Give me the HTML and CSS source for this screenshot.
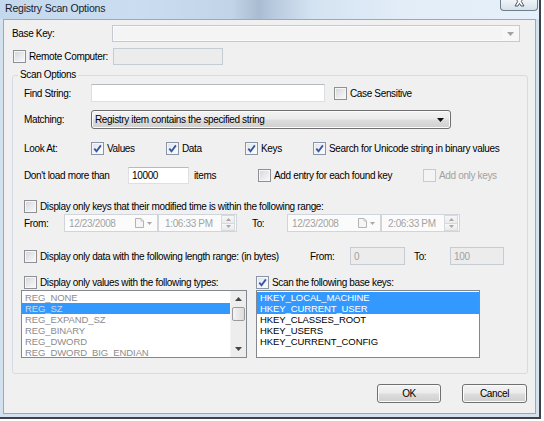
FILE: index.html
```html
<!DOCTYPE html>
<html>
<head>
<meta charset="utf-8">
<title>Registry Scan Options</title>
<link rel="stylesheet" href="styles.css">
</head>
<body>
<div class="window">
  <div class="titlebar">
    <span class="title">Registry Scan Options</span>
    <div class="close">
      <svg width="11" height="8" viewBox="0 4 11 8"><path d="M1 1 L4 1 L5.5 3.6 L7 1 L10 1 L7.3 5.5 L10 10 L7 10 L5.5 7.4 L4 10 L1 10 L3.7 5.5 Z" fill="#fdfdfd" stroke="#3f4852" stroke-width="0.9"/></svg>
    </div>
  </div>
  <div class="frame">
    <div class="client">
      <div class="row r-base">
        <span class="w-base">Base Key:</span>
        <div class="combo">
          <span class="combo-fill"></span>
          <span class="combo-btn"><svg width="7" height="4" viewBox="0 0 7 4"><path d="M0 0 L7 0 L3.5 4 Z" fill="#a3a3a3"/></svg></span>
        </div>
      </div>

      <div class="row r-remote">
        <span class="chk first"><span class="cb"></span><span class="t w-remote">Remote Computer:</span></span>
        <div class="inp-dis w-remote-inp"></div>
      </div>

      <fieldset class="group">
        <legend>Scan Options</legend>

        <div class="row r-find">
          <span class="w-lbl">Find String:</span>
          <div class="inp w-find"></div>
          <span class="chk case"><span class="cb"></span><span class="t">Case Sensitive</span></span>
        </div>

        <div class="row r-match">
          <span class="w-lbl">Matching:</span>
          <div class="select">
            <span class="select-text">Registry item contains the specified string</span>
            <svg width="7" height="4" viewBox="0 0 7 4"><path d="M0 0 L7 0 L3.5 4 Z" fill="#111"/></svg>
          </div>
        </div>

        <div class="row r-look">
          <span class="w-lbl">Look At:</span>
          <span class="chk c-values"><span class="cb on"><svg width="11" height="11" viewBox="0 0 11 11"><path d="M2.3 5.6 L4.5 8.2 L8.9 2.4" fill="none" stroke="#3457a4" stroke-width="1.8"/></svg></span><span class="t">Values</span></span>
          <span class="chk c-data"><span class="cb on"><svg width="11" height="11" viewBox="0 0 11 11"><path d="M2.3 5.6 L4.5 8.2 L8.9 2.4" fill="none" stroke="#3457a4" stroke-width="1.8"/></svg></span><span class="t">Data</span></span>
          <span class="chk c-keys"><span class="cb on"><svg width="11" height="11" viewBox="0 0 11 11"><path d="M2.3 5.6 L4.5 8.2 L8.9 2.4" fill="none" stroke="#3457a4" stroke-width="1.8"/></svg></span><span class="t">Keys</span></span>
          <span class="chk"><span class="cb on"><svg width="11" height="11" viewBox="0 0 11 11"><path d="M2.3 5.6 L4.5 8.2 L8.9 2.4" fill="none" stroke="#3457a4" stroke-width="1.8"/></svg></span><span class="t">Search for Unicode string in binary values</span></span>
        </div>

        <div class="row r-load">
          <span class="w-load">Don't load more than</span>
          <div class="inp w-count"><span class="val">10000</span></div>
          <span class="w-items">items</span>
          <span class="chk"><span class="cb"></span><span class="t w-addentry">Add entry for each found key</span></span>
          <span class="chk dis"><span class="cb"></span><span class="t">Add only keys</span></span>
        </div>

        <div class="row r-keys">
          <span class="chk"><span class="cb"></span><span class="t">Display only keys that their modified time is within the following range:</span></span>
        </div>

        <div class="row r-from">
          <span class="w-from">From:</span>
          <div class="date">
            <span class="date-text">12/23/2008</span>
            <svg class="cal" width="9" height="10" viewBox="0 0 9 10"><path d="M0.5 0.5 H6 L8.5 3 V9.5 H0.5 Z" fill="#f6f6f6" stroke="#b3b3b3"/><path d="M6 0.5 V3 H8.5" fill="none" stroke="#c4c4c4"/></svg>
            <svg class="darr" width="5" height="3" viewBox="0 0 5 3"><path d="M0 0 L5 0 L2.5 3 Z" fill="#a8a8a8"/></svg>
          </div>
          <div class="time">
            <span class="date-text t-time">1:06:33 PM</span>
            <span class="spin"><span class="sp"><svg width="5" height="3" viewBox="0 0 5 3"><path d="M0 3 L2.5 0 L5 3 Z" fill="#a8a8a8"/></svg></span><span class="sp"><svg width="5" height="3" viewBox="0 0 5 3"><path d="M0 0 L5 0 L2.5 3 Z" fill="#a8a8a8"/></svg></span></span>
          </div>
          <span class="w-to">To:</span>
          <div class="date">
            <span class="date-text">12/23/2008</span>
            <svg class="cal" width="9" height="10" viewBox="0 0 9 10"><path d="M0.5 0.5 H6 L8.5 3 V9.5 H0.5 Z" fill="#f6f6f6" stroke="#b3b3b3"/><path d="M6 0.5 V3 H8.5" fill="none" stroke="#c4c4c4"/></svg>
            <svg class="darr" width="5" height="3" viewBox="0 0 5 3"><path d="M0 0 L5 0 L2.5 3 Z" fill="#a8a8a8"/></svg>
          </div>
          <div class="time">
            <span class="date-text t-time">2:06:33 PM</span>
            <span class="spin"><span class="sp"><svg width="5" height="3" viewBox="0 0 5 3"><path d="M0 3 L2.5 0 L5 3 Z" fill="#a8a8a8"/></svg></span><span class="sp"><svg width="5" height="3" viewBox="0 0 5 3"><path d="M0 0 L5 0 L2.5 3 Z" fill="#a8a8a8"/></svg></span></span>
          </div>
        </div>

        <div class="row r-data">
          <span class="chk w-datachk"><span class="cb"></span><span class="t">Display only data with the following length range: (in bytes)</span></span>
          <span class="w-from2">From:</span>
          <div class="inp-dis w-len1"><span class="val gray">0</span></div>
          <span class="w-to2">To:</span>
          <div class="inp-dis w-len2"><span class="val gray">100</span></div>
        </div>

        <div class="row r-vals">
          <span class="chk w-valchk"><span class="cb"></span><span class="t">Display only values with the following types:</span></span>
          <span class="chk"><span class="cb on"><svg width="11" height="11" viewBox="0 0 11 11"><path d="M2.3 5.6 L4.5 8.2 L8.9 2.4" fill="none" stroke="#3457a4" stroke-width="1.8"/></svg></span><span class="t">Scan the following base keys:</span></span>
        </div>

        <div class="row r-lists">
          <div class="list list-types">
            <div class="items dis">
              <div class="item">REG_NONE</div>
              <div class="item sel">REG_SZ</div>
              <div class="item">REG_EXPAND_SZ</div>
              <div class="item">REG_BINARY</div>
              <div class="item">REG_DWORD</div>
              <div class="item">REG_DWORD_BIG_ENDIAN</div>
            </div>
            <div class="sbar">
              <span class="sbtn"><svg width="7" height="4" viewBox="0 0 7 4"><path d="M0 4 L3.5 0 L7 4 Z" fill="#444"/></svg></span>
              <span class="thumb"></span>
              <span class="track"></span>
              <span class="sbtn"><svg width="7" height="4" viewBox="0 0 7 4"><path d="M0 0 L7 0 L3.5 4 Z" fill="#444"/></svg></span>
            </div>
          </div>
          <div class="list list-keys">
            <div class="items">
              <div class="item sel">HKEY_LOCAL_MACHINE</div>
              <div class="item sel">HKEY_CURRENT_USER</div>
              <div class="item">HKEY_CLASSES_ROOT</div>
              <div class="item">HKEY_USERS</div>
              <div class="item">HKEY_CURRENT_CONFIG</div>
            </div>
          </div>
        </div>
      </fieldset>

      <div class="row r-buttons">
        <div class="btn b-ok">OK</div>
        <div class="btn b-cancel">Cancel</div>
      </div>
    </div>
  </div>
</div>
</body>
</html>
```
FILE: styles.css
```css
* { box-sizing: border-box; }
html, body { margin: 0; padding: 0; }
body {
  background: #ffffff;
  font-family: "Liberation Sans", Arial, sans-serif;
  font-size: 10px;
  letter-spacing: -0.35px;
  color: #000;
}

.window {
  width: 541px;
  height: 419px;
  border-right: 2px solid #3e4248;
  border-bottom: 2px solid #3e4248;
  display: flex;
  flex-direction: column;
  background: #d4e1ee;
}

.titlebar {
  height: 19px;
  flex: none;
  display: flex;
  align-items: flex-start;
  background: linear-gradient(90deg, #c4d8ed 0%, #cbddf0 25%, #c2d4e7 43%, #a9bcd1 48%, #b9cbdf 51%, #d4e3f2 58%, #e2edf8 75%, #e6f0fa 100%);
}
.title {
  margin: 3px 0 0 5px;
  font-size: 10.5px;
  letter-spacing: -0.2px;
  line-height: 11px;
  color: #17212c;
}
.close {
  margin-left: auto;
  margin-right: 1px;
  width: 38px;
  height: 11px;
  border: 1px solid #6f7d8c;
  border-top: none;
  border-radius: 0 0 4px 4px;
  background: linear-gradient(#f0f4f8, #d6e0ea);
  display: flex;
  justify-content: center;
  align-items: flex-end;
  padding-bottom: 2px;
}

.frame {
  flex: 1;
  display: flex;
  padding: 0 3px 3px 3px;
}
.client {
  flex: 1;
  background: #f0f0f0;
  border: 1px solid #9aa9b9;
  padding: 5px 0 0 8px;
  display: flex;
  flex-direction: column;
}

.row { display: flex; align-items: center; flex: none; white-space: nowrap; }

/* checkbox */
.chk { display: inline-flex; align-items: center; flex: none; }
.chk .t { margin-left: 3px; }
.cb {
  width: 13px;
  height: 13px;
  flex: none;
  border: 1px solid #8f9093;
  background: linear-gradient(135deg, #d2d4d8 0%, #e6e7e9 45%, #fbfbfb 100%);
  box-shadow: inset 0 0 0 1px #f6f6f6;
  display: flex;
  align-items: center;
  justify-content: center;
}
.cb.on { background: linear-gradient(135deg, #dde3ea 0%, #eef1f5 50%, #ffffff 100%); border-color: #8c95a3; }
.chk.dis .cb { border-color: #c9cacc; background: #f4f4f4; box-shadow: none; }
.chk.dis .t { color: #a2a2a2; }

/* base key */
.r-base { height: 17px; }
.w-base { width: 100px; }
.combo {
  width: 408px;
  height: 17px;
  border: 1px solid #c4cad2;
  background: #f4f4f4;
  box-shadow: inset 0 0 0 1px #fafafa;
  display: flex;
}
.combo-fill { flex: 1; }
.combo-btn { width: 17px; display: flex; align-items: center; justify-content: center; background: #f7f7f7; }

/* remote */
.r-remote { height: 17px; margin-top: 6px; }
.chk.first { margin-left: 1px; }
.w-remote { width: 84px; }
.inp-dis {
  height: 17px;
  border: 1px solid #c6ccd3;
  background: #ececec;
  display: flex;
  align-items: center;
}
.w-remote-inp { width: 110px; }

/* group */
.group {
  margin: 4px 0 0 0;
  width: 516px;
  min-width: 0;
  border: 1px solid #d3dce3;
  border-radius: 3px;
  padding: 0 0 15px 11px;
}
.group legend {
  padding: 0 2px;
  margin-left: -6px;
  line-height: 12px;
}

.w-lbl { width: 67px; }
.inp {
  height: 18px;
  border: 1px solid #dbe0e6;
  border-top-color: #b4bac1;
  background: #fff;
  display: flex;
  align-items: center;
}
.val { padding-left: 3px; }
.val.gray { color: #a0a0a0; }

.r-find { height: 18px; margin-top: 3px; }
.w-find { width: 234px; }
.case { margin-left: 9px; }

.r-match { height: 19px; margin-top: 8px; }
.select {
  width: 360px;
  height: 19px;
  border: 1px solid #707070;
  border-radius: 3px;
  background: linear-gradient(#f3f3f3 0%, #ebebeb 48%, #dddddd 52%, #cfcfcf 100%);
  box-shadow: inset 0 0 0 1px #fbfbfb;
  display: flex;
  align-items: center;
  padding: 0 6px 0 3px;
}
.select-text { flex: 1; }

.r-look { height: 13px; margin-top: 13px; }
.c-values { width: 75px; }
.c-data { width: 79px; }
.c-keys { width: 68px; }

.r-load { height: 17px; margin-top: 12px; }
.w-load { width: 104px; }
.w-count { width: 61px; height: 17px; }
.w-items { width: 69px; padding-left: 5px; }
.w-addentry { width: 149px; }

.r-keys { height: 13px; margin-top: 16px; }

.r-from { height: 18px; margin-top: 1px; }
.w-from { width: 40px; }
.w-to { width: 35px; margin-left: 15px; }
.date, .time {
  height: 18px;
  border: 1px solid #d0d5db;
  background: #fbfbfb;
  display: flex;
  align-items: center;
  flex: none;
}
.date { width: 94px; padding: 0 5px 0 4px; }
.time { width: 79px; padding: 0 1px 0 6px; }
.date-text { flex: 1; color: #a3a3a3; }
.cal { margin-right: 3px; }
.spin {
  width: 14px;
  height: 16px;
  display: flex;
  flex-direction: column;
}
.sp {
  flex: 1;
  border: 1px solid #d6d9dd;
  background: linear-gradient(#f7f7f7, #eaeaea);
  display: flex;
  align-items: center;
  justify-content: center;
}
.sp + .sp { border-top: none; }

.r-data { height: 18px; margin-top: 15px; }
.w-datachk { width: 286px; }
.w-from2 { width: 40px; }
.w-len1 { width: 55px; height: 18px; }
.w-to2 { width: 36px; margin-left: 9px; }
.w-len2 { width: 54px; height: 18px; }

.r-vals { height: 13px; margin-top: 11px; }
.w-valchk { width: 232px; }

.r-lists { margin-top: 1px; align-items: flex-start; }
.list {
  height: 68px;
  border: 1px solid #828790;
  background: #fff;
  display: flex;
  flex: none;
}
.list-types { width: 226px; margin-left: -3px; }
.list-keys { width: 224px; margin-left: 9px; }
.items {
  flex: 1;
  padding-top: 1px;
  overflow: hidden;
  font-size: 9.5px;
  letter-spacing: -0.1px;
}
.item { height: 11px; line-height: 11px; padding-left: 3px; white-space: nowrap; }
.items.dis .item { color: #8c8c8c; }
.item.sel { background: #3399ff; color: #fff; }
.items.dis .item.sel { color: #cfdcec; }

.sbar {
  width: 16px;
  display: flex;
  flex-direction: column;
  background: #ededed;
  border-left: 1px solid #f4f4f4;
}
.sbtn {
  height: 16px;
  display: flex;
  align-items: center;
  justify-content: center;
  flex: none;
}
.thumb {
  height: 14px;
  flex: none;
  margin: 0 1px;
  border: 1px solid #9b9b9b;
  border-radius: 2px;
  background: linear-gradient(90deg, #f4f4f4, #dcdcdc);
}
.track { flex: 1; }

.r-buttons {
  justify-content: flex-end;
  margin-top: 10px;
  padding-right: 8px;
  gap: 21px;
}
.btn {
  height: 19px;
  border: 1px solid #707070;
  border-radius: 3px;
  background: linear-gradient(#f3f3f3 0%, #ebebeb 48%, #dddddd 52%, #cfcfcf 100%);
  box-shadow: inset 0 0 0 1px #fbfbfb;
  display: flex;
  align-items: center;
  justify-content: center;
}
.b-ok { width: 64px; }
.b-cancel { width: 65px; }
```
